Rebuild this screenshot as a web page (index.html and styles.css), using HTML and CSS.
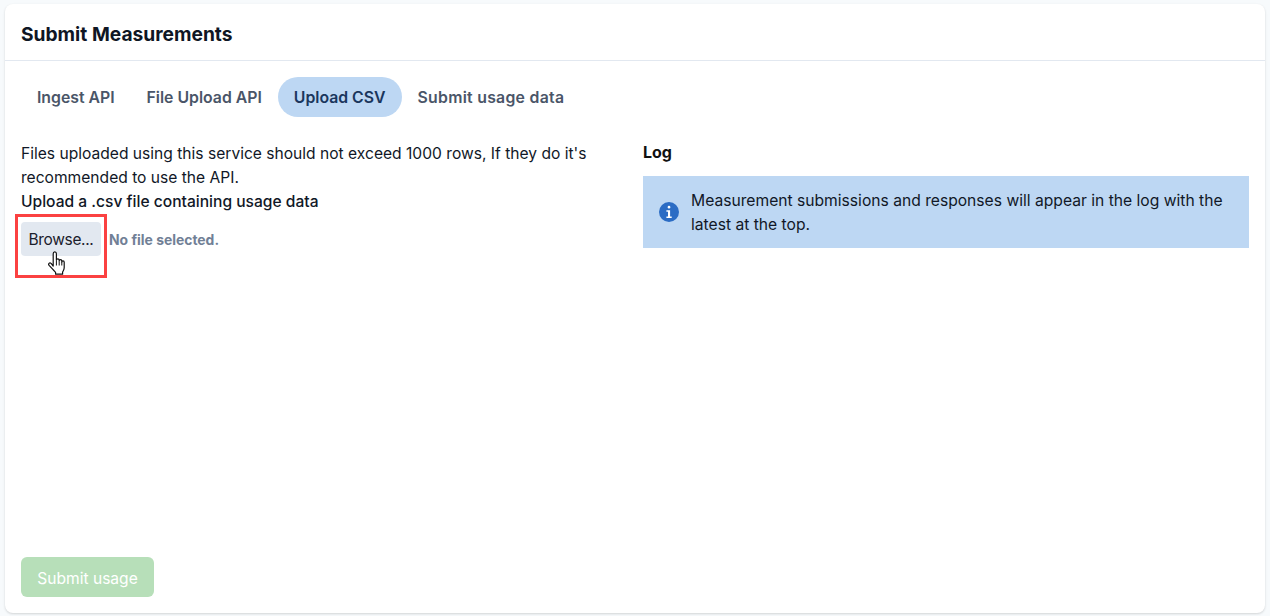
FILE: index.html
```html
<!DOCTYPE html>
<html lang="en">
<head>
<meta charset="utf-8">
<title>Submit Measurements</title>
<link rel="stylesheet" href="styles.css">
</head>
<body>
<main class="card">
  <header class="card-header"><h2 class="card-title">Submit Measurements</h2></header>
  <section class="card-body">
    <nav class="tabs">
      <span class="tab">Ingest API</span>
      <span class="tab">File Upload API</span>
      <span class="tab tab-active">Upload CSV</span>
      <span class="tab tab-wide">Submit usage data</span>
    </nav>
    <div class="columns">
      <div class="col col-left">
        <p class="para">Files uploaded using this service should not exceed 1000 rows, If they do it's recommended to use the API.</p>
        <p class="label">Upload a .csv file containing usage data</p>
        <div class="file-row">
          <span class="browse">Browse...</span>
          <span class="file-name">No file selected.</span>
          <span class="highlight"></span>
          <svg class="hand" width="20" height="26" viewBox="0 0 20 25">
            <path d="M6.2 15.5V3.2c0-1.1.7-1.9 1.6-1.9s1.6.8 1.6 1.9v6.6c0-.9.6-1.4 1.4-1.4s1.4.6 1.4 1.4v.7c0-.8.6-1.3 1.3-1.3s1.3.6 1.3 1.3v1c0-.7.6-1.1 1.2-1.1s1.2.5 1.2 1.3v5.4c0 1.2-.3 2.2-.9 3.2l-.7 1.2v2.2H8.6v-1.7c-.6-.8-1.6-1.7-2.5-2.8l-4-4.3c-.6-.7-.6-1.5-.1-2s1.4-.6 2.1 0z" fill="#fff" stroke="#111" stroke-width="1.2" stroke-linejoin="round"/>
            <path d="M9.4 10.5v4.5M12.2 10.8v4.2M14.8 11.5v3.5" fill="none" stroke="#111" stroke-width="1"/>
          </svg>
        </div>
      </div>
      <div class="col">
        <h3 class="log-title">Log</h3>
        <div class="alert">
          <svg class="alert-icon" width="20" height="20" viewBox="0 0 20 20">
            <circle cx="10" cy="10" r="10" fill="#2b6cc4"/>
            <rect x="8.7" y="3.8" width="2.6" height="2.6" rx="1.2" fill="#fff"/>
            <path d="M7.4 8.2h3.7v6.2h1.6v1.6H7.4v-1.6h1.6V9.8H7.4z" fill="#fff"/>
          </svg>
          <p class="alert-text">Measurement submissions and responses will appear in the log with the latest at the top.</p>
        </div>
      </div>
    </div>
    <div class="actions"><span class="submit">Submit usage</span></div>
  </section>
</main>
</body>
</html>
```
FILE: styles.css
```css
* { box-sizing: border-box; }
html, body { height: 100%; }
body {
  margin: 0;
  padding: 4px 5px 3px;
  background: #f7fafc;
  font-family: Inter, "Liberation Sans", sans-serif;
  font-size: 16px;
  line-height: 24px;
  color: #1a202c;
  overflow: hidden;
}
p, h2, h3 { margin: 0; }
.card {
  height: 609px;
  display: flex;
  flex-direction: column;
  background: #fff;
  border-radius: 8px;
  box-shadow: 0 1px 3px rgba(0,0,0,.1), 0 1px 2px rgba(0,0,0,.06);
}
.card-header {
  height: 57px;
  padding: 16px 16px 0;
  border-bottom: 1px solid #e2e8f0;
}
.card-title { font-size: 19.2px; line-height: 29px; font-weight: 700; color: #0f1624; }
.card-body { flex: 1; display: flex; flex-direction: column; padding: 16px; }
.tabs { display: flex; height: 40px; }
.tab {
  height: 40px;
  padding: 0 16px;
  border-radius: 20px;
  font-size: 15.8px;
  line-height: 41px;
  font-weight: 600;
  color: #4a5568;
}
.tab-wide { letter-spacing: .28px; }
.tab-active { background: #bdd7f3; color: #1a365d; }
.columns { display: grid; grid-template-columns: 1fr 1fr; column-gap: 16px; padding-top: 23px; }
.col-left { padding-top: 2px; }
.para, .label { font-size: 15.6px; color: #111827; }
.label { font-weight: 500; }
.file-row { position: relative; display: flex; align-items: center; gap: 8px; margin-top: 8px; }
.browse {
  width: 80px;
  height: 34px;
  border-radius: 4px;
  background: #e2e8f0;
  font-size: 15.5px;
  font-weight: 400;
  letter-spacing: -.35px;
  line-height: 36px;
  text-align: center;
}
.file-name { font-size: 13.9px; line-height: 26px; padding-top: 2px; font-weight: 700; color: #718096; }
.highlight {
  position: absolute;
  left: -6px;
  top: -8px;
  width: 92px;
  height: 64px;
  border: 3px solid #fb4141;
}
.hand { position: absolute; left: 26px; top: 28px; }
.log-title { font-size: 16px; line-height: 24px; font-weight: 700; padding-bottom: 12px; color: #111; }
.alert {
  display: flex;
  align-items: center;
  gap: 12px;
  padding: 12px 16px;
  background: #bdd7f3;
}
.alert-icon { flex: none; }
.alert-text { font-size: 15.65px; line-height: 24px; padding-top: 1px; margin-bottom: -1px; color: #111827; }
.actions { margin-top: auto; }
.submit {
  display: inline-block;
  width: 133px;
  height: 40px;
  border-radius: 6px;
  background: #b7dfb9;
  color: #fff;
  font-size: 15.6px;
  font-weight: 400;
  line-height: 43px;
  text-align: center;
}
```
